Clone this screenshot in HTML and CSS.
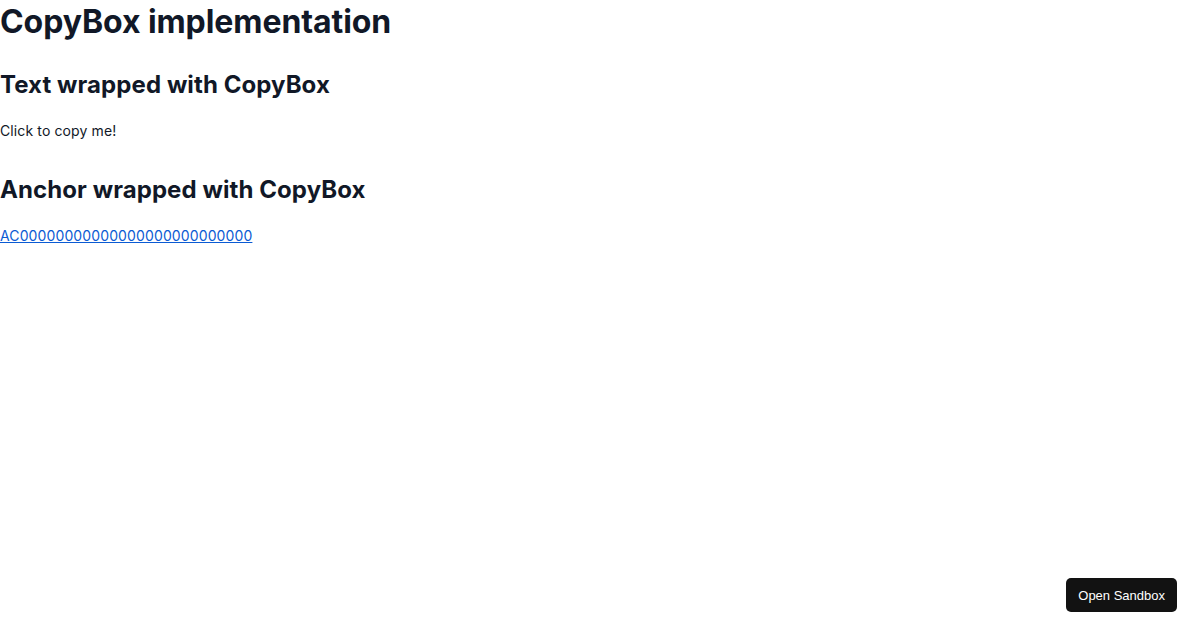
FILE: index.html
```html
<!DOCTYPE html>
<html lang="en">
<head>
    <meta charset="UTF-8">
    <meta name="viewport" content="width=device-width, initial-scale=1.0">
    <title>CopyBox</title>
    <link rel="stylesheet" href="styles.css">
</head>
<body>

<h1>CopyBox implementation</h1>

<h2>Text wrapped with CopyBox</h2>
<p class="copy-box">Click to copy me!</p>

<h2>Anchor wrapped with CopyBox</h2>
<p class="copy-box"><a href="#">AC00000000000000000000000000</a></p>

<button class="sandbox-btn">Open Sandbox</button>

</body>
</html>
```

FILE: styles.css
```css
/* Basic page styling */
body {
    margin: 0;
    padding-top: 2px;
    font-family: Inter, "Noto Sans", sans-serif;
    color: #111827;
}
h1 {
    font-size: 32px;
    font-weight: 700;
    line-height: 40px;
    letter-spacing: -0.08px;
    margin: 0 0 27px;
}
h2 {
    font-size: 24px;
    font-weight: 700;
    line-height: 32px;
    letter-spacing: 0.08px;
    margin: 0 0 20px;
}
p {
    font-size: 14px;
    line-height: 20px;
    letter-spacing: 0.12px;
    margin: 0 0 33px;
}
a {
    color: #0b5bd3;
}
.sandbox-btn {
    position: fixed;
    right: 23px;
    bottom: 18px;
    background-color: #121212;
    color: #fff;
    border: none;
    border-radius: 5px;
    padding: 0 12px;
    height: 34px;
    font-family: "Liberation Sans", Arial, sans-serif;
    font-size: 13px;
    cursor: pointer;
}
```
